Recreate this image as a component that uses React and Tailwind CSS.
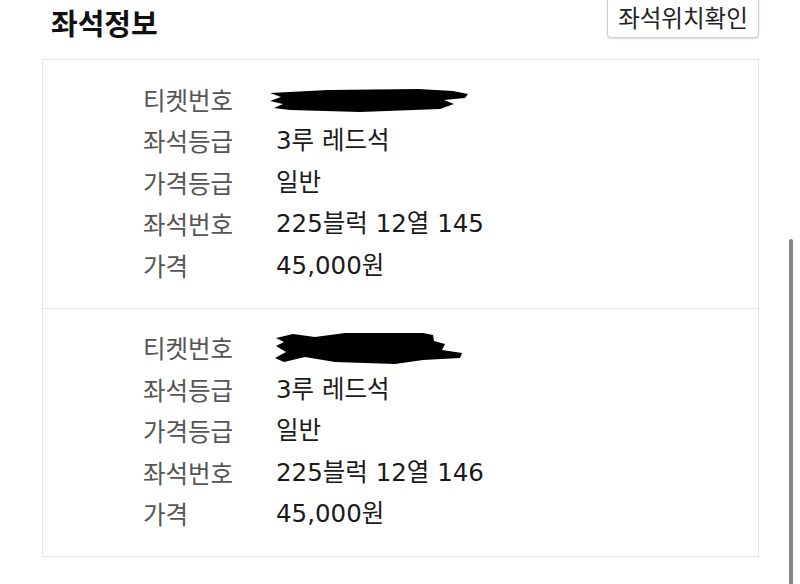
import React from 'react';

const Blob1 = () => (
  <svg width="202" height="26" viewBox="0 0 202 26" className="ml-[-8px] block">
    <path
      d="M2,6 L60,3 L150,2 L185,4 L200,7 L197,11 L176,13 L186,17 L172,22 L92,25 L22,23 L6,21 L15,17 L2,14 L13,10 Z"
      fill="#000"
    />
  </svg>
);

const Blob2 = () => (
  <svg width="192" height="34" viewBox="0 0 192 34" className="ml-[-3px] block">
    <path
      d="M3,7 L20,3 L42,6 L72,2 L150,2 L160,4 L161,10 L172,13 L169,19 L189,22 L187,27 L150,29 L122,33 L62,31 L32,26 L11,31 L2,27 L13,21 L3,15 L11,11 Z"
      fill="#000"
    />
  </svg>
);

const Row = ({ label, children }) => (
  <div className="flex items-center h-[41.5px]">
    <div className="w-[133px] text-[#555] shrink-0">{label}</div>
    <div
      className="text-[#1a1a1a]"
      style={{ fontFamily: '"DejaVu Sans", "Noto Sans CJK KR", sans-serif' }}
    >
      {children}
    </div>
  </div>
);

const Section = ({ blob, seat, last }) => (
  <div className={`pl-[100px] pt-[19px] ${last ? 'pb-[21px]' : 'pb-[21px] border-b border-[#e6e6e6]'}`}>
    <Row label="티켓번호">{blob}</Row>
    <Row label="좌석등급">3루 레드석</Row>
    <Row label="가격등급">일반</Row>
    <Row label="좌석번호">{seat}</Row>
    <Row label="가격">45,000원</Row>
  </div>
);

export default function App() {
  return (
    <div
      className="relative w-[800px] h-[584px] overflow-hidden bg-white"
      style={{ fontFamily: '"Noto Sans CJK KR", "Noto Sans", sans-serif' }}
    >
      <div className="flex justify-between items-start pl-[51px] pr-[41px]">
        <h1 className="text-[29px] font-bold text-[#111] leading-none mt-[8px]">좌석정보</h1>
        <button className="mt-[-10px] h-[48px] w-[152px] pt-[8px] border border-[#cfcfcf] rounded-[4px] shadow-[0_1px_2px_rgba(0,0,0,0.15)] bg-white text-[23.5px] text-[#222] leading-none">
          좌석위치확인
        </button>
      </div>

      <div className="ml-[42px] mr-[41px] mt-[21px] border border-[#e6e6e6] text-[24.5px] leading-none">
        <Section blob={<Blob1 />} seat="225블럭 12열 145" />
        <Section blob={<Blob2 />} seat="225블럭 12열 146" last />
      </div>

      <div className="absolute left-[789px] top-[239px] w-[4px] h-[360px] rounded-full bg-[#858585]" />
    </div>
  );
}
